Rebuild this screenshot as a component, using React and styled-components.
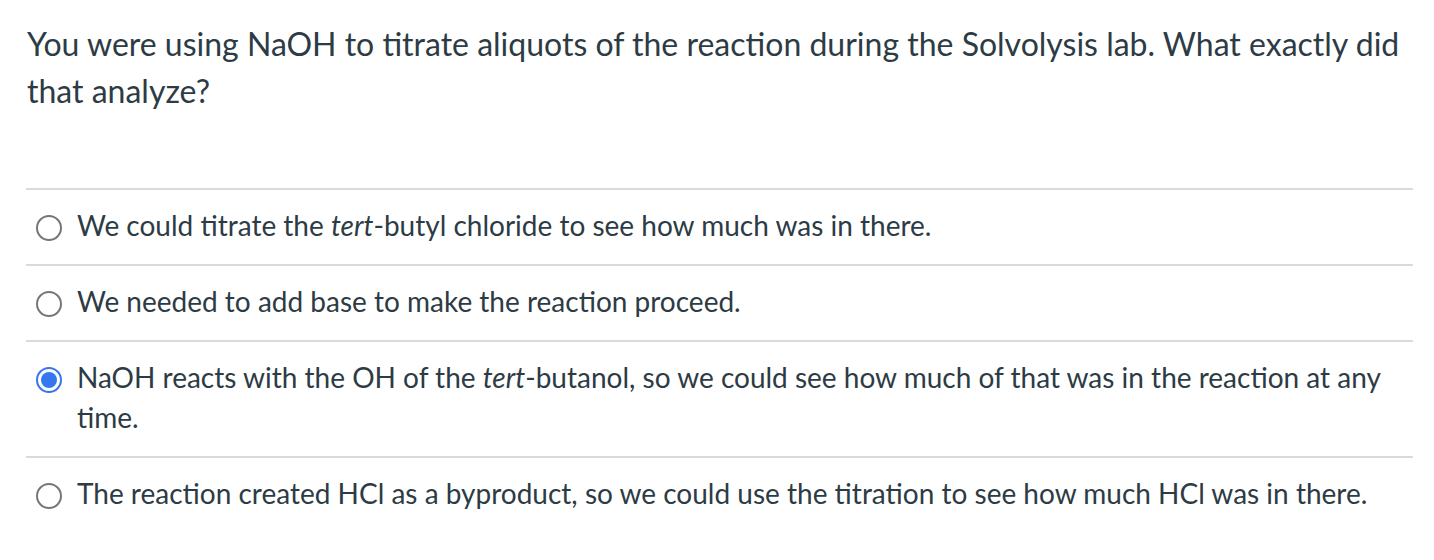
import React from 'react';
import styled, { createGlobalStyle } from 'styled-components';

const GlobalStyle = createGlobalStyle`
  body {
    margin: 0;
    background: #ffffff;
    font-family: Lato, "Helvetica Neue", Arial, sans-serif;
    color: #2d3b45;
  }
`;

const Page = styled.div`
  padding: 20px 21px 0 26px;
`;

const Question = styled.p`
  margin: 0 0 74px 1px;
  font-size: 32px;
  line-height: 47px;
`;

const AnswerList = styled.div`
  display: flex;
  flex-direction: column;
`;

const AnswerRow = styled.label`
  display: flex;
  align-items: flex-start;
  gap: 15px;
  padding: 15px 0 19px 10px;
  border-top: 2px solid #dadada;
  font-size: 28px;
  line-height: 40px;
  cursor: pointer;
`;

const Radio = styled.span`
  flex: none;
  box-sizing: border-box;
  width: 26px;
  height: 26px;
  margin-top: 10px;
  border-radius: 50%;
  border: 2px solid ${p => (p.checked ? '#3577ef' : '#767676')};
  background: #fff;
  display: flex;
  align-items: center;
  justify-content: center;

  &::after {
    content: '';
    display: ${p => (p.checked ? 'block' : 'none')};
    width: 16px;
    height: 16px;
    border-radius: 50%;
    background: #3577ef;
  }
`;

const AnswerText = styled.span`
  flex: 1;
`;

const answers = [
  { id: 1, text: <>We could titrate the <em>tert</em>-butyl chloride to see how much was in there.</> },
  { id: 2, text: <>We needed to add base to make the reaction proceed.</> },
  { id: 3, text: <>NaOH reacts with the OH of the <em>tert</em>-butanol, so we could see how much of that was in the reaction at any time.</>, checked: true },
  { id: 4, text: <>The reaction created HCl as a byproduct, so we could use the titration to see how much HCl was in there.</> },
];

export default function App() {
  return (
    <Page>
      <GlobalStyle />
      <Question>
        You were using NaOH to titrate aliquots of the reaction during the Solvolysis lab. What exactly did that analyze?
      </Question>
      <AnswerList>
        {answers.map(a => (
          <AnswerRow key={a.id}>
            <Radio checked={a.checked} />
            <AnswerText>{a.text}</AnswerText>
          </AnswerRow>
        ))}
      </AnswerList>
    </Page>
  );
}
